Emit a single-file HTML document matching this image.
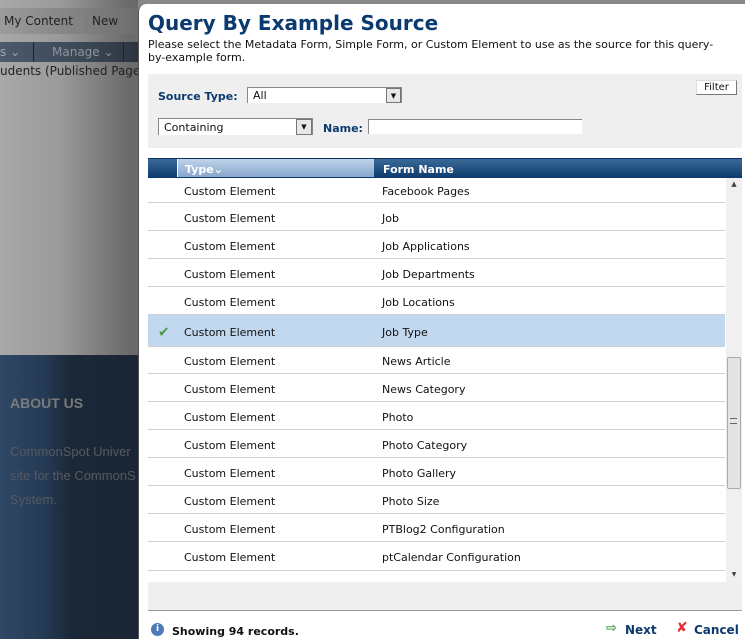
<!DOCTYPE html>
<html><head><meta charset="utf-8"><style>
*{margin:0;padding:0;box-sizing:border-box}
body{width:745px;height:639px;overflow:hidden;position:relative;font-family:"DejaVu Sans","Liberation Sans",sans-serif;font-size:11px;color:#111;background:#888}
.a{position:absolute}
.row{position:absolute;left:148px;width:577px;border-bottom:1px solid #cfcfcf}
.row span{position:absolute;top:50%;transform:translateY(-40%);font-size:11px}
.c1{left:36px}.c2{left:234px}
</style></head><body>
<div class="a" style="left:0;top:0;width:138px;height:355px;background:linear-gradient(90deg,#a8a8a8 0,#9a9a9a 60px,#6a6a6a 130px)"></div>
<div class="a" style="left:0;top:8px;width:138px;height:26px;background:linear-gradient(90deg,#9b9b9b,#6e6e6e)"></div>
<div class="a" style="left:4px;top:14px;font-size:12px;color:#222">My Content</div>
<div class="a" style="left:81px;top:10px;width:1px;height:22px;background:#8a8a8a"></div>
<div class="a" style="left:92px;top:14px;font-size:12px;color:#222">New</div>
<div class="a" style="left:0;top:42px;width:138px;height:20px;background:linear-gradient(90deg,#4c5a6c,#3b4654 90px,#2c3440)"></div>
<div class="a" style="left:0;top:45px;font-size:12px;color:#9aa">s ⌄</div>
<div class="a" style="left:33px;top:42px;width:1px;height:20px;background:#223"></div>
<div class="a" style="left:52px;top:45px;font-size:12px;color:#8a93a0">Manage ⌄</div>
<div class="a" style="left:123px;top:42px;width:1px;height:20px;background:#223"></div>
<div class="a" style="left:0;top:64px;font-size:12px;color:#222">udents (Published Page -</div>
<div class="a" style="left:0;top:355px;width:138px;height:284px;background:linear-gradient(90deg,#2e4866 0,#253a54 45px,#1b2838 70px,#1a2635)"></div>
<div class="a" style="left:10px;top:395px;font-family:'Liberation Sans',sans-serif;font-weight:bold;font-size:14px;color:#7a7a7a">ABOUT US</div>
<div class="a" style="left:10px;top:440px;font-family:'Liberation Sans',sans-serif;font-size:13px;line-height:24px;color:#555a60;white-space:nowrap;width:128px;overflow:hidden">CommonSpot Univer<br>site for the CommonS<br>System.</div>
<div class="a" style="left:138px;top:4px;width:607px;height:635px;background:#fff;border-top-left-radius:8px;border-left:1px solid #555"></div>
<div class="a" style="left:148px;top:11px;font-size:20px;font-weight:bold;color:#0a3a6e">Query By Example Source</div>
<div class="a" style="left:148px;top:38px;width:595px;font-size:11px;line-height:13px;color:#111">Please select the Metadata Form, Simple Form, or Custom Element to use as the source for this query-<br>by-example form.</div>
<div class="a" style="left:148px;top:74px;width:594px;height:74px;background:#efefef"></div>
<div class="a" style="left:696px;top:80px;width:41px;height:15px;background:#fff;border:1px solid #ddd;border-right-color:#777;border-bottom-color:#777;font-size:10px;text-align:center;line-height:13px">Filter</div>
<div class="a" style="left:158px;top:90px;font-weight:bold;color:#0a3a6e;font-size:11px">Source Type:</div>
<div class="a" style="left:247px;top:87px;width:155px;height:16px;background:#fff;border:1px solid #888;border-bottom:none;padding-left:5px;font-size:11px;line-height:16px">All</div>
<div class="a" style="left:386px;top:88px;width:15px;height:15px;background:#e8e8e8;border:1px solid #777;font-size:7px;text-align:center;line-height:14px">▼</div>
<div class="a" style="left:158px;top:118px;width:155px;height:17px;background:#fff;border:1px solid #888;border-bottom:none;padding-left:5px;font-size:11px;line-height:18px">Containing</div>
<div class="a" style="left:296px;top:119px;width:16px;height:16px;background:#e8e8e8;border:1px solid #777;font-size:7px;text-align:center;line-height:14px">▼</div>
<div class="a" style="left:323px;top:122px;font-weight:bold;color:#0a3a6e;font-size:11px">Name:</div>
<div class="a" style="left:368px;top:119px;width:214px;height:15px;background:#fff;border:1px solid #888;border-bottom:none;border-right:none"></div>
<div class="a" style="left:148px;top:158px;width:594px;height:20px;background:linear-gradient(#3a6a98,#0c3a6c);border-top:1px solid #0c3060"></div>
<div class="a" style="left:177px;top:159px;width:197px;height:18px;background:linear-gradient(#c0d4ea,#86a6cc);border-left:1px solid #fff"></div>
<div class="a" style="left:185px;top:163px;font-weight:bold;color:#fff;font-size:11px">Type⌄</div>
<div class="a" style="left:383px;top:163px;font-weight:bold;color:#fff;font-size:11px">Form Name</div>
<div class="row" style="top:178px;height:25px"><span class="c1">Custom Element</span><span class="c2">Facebook Pages</span></div>
<div class="row" style="top:203px;height:28px"><span class="c1">Custom Element</span><span class="c2">Job</span></div>
<div class="row" style="top:231px;height:28px"><span class="c1">Custom Element</span><span class="c2">Job Applications</span></div>
<div class="row" style="top:259px;height:28px"><span class="c1">Custom Element</span><span class="c2">Job Departments</span></div>
<div class="row" style="top:287px;height:28px"><span class="c1">Custom Element</span><span class="c2">Job Locations</span></div>
<div class="row" style="top:315px;height:32px;background:#c2d8ee"><span style="left:10px;color:#4a9a4a;font-size:14px">✔</span><span class="c1">Custom Element</span><span class="c2">Job Type</span></div>
<div class="row" style="top:347px;height:27px"><span class="c1">Custom Element</span><span class="c2">News Article</span></div>
<div class="row" style="top:374px;height:28px"><span class="c1">Custom Element</span><span class="c2">News Category</span></div>
<div class="row" style="top:402px;height:28px"><span class="c1">Custom Element</span><span class="c2">Photo</span></div>
<div class="row" style="top:430px;height:28px"><span class="c1">Custom Element</span><span class="c2">Photo Category</span></div>
<div class="row" style="top:458px;height:28px"><span class="c1">Custom Element</span><span class="c2">Photo Gallery</span></div>
<div class="row" style="top:486px;height:28px"><span class="c1">Custom Element</span><span class="c2">Photo Size</span></div>
<div class="row" style="top:514px;height:28px"><span class="c1">Custom Element</span><span class="c2">PTBlog2 Configuration</span></div>
<div class="row" style="top:542px;height:29px"><span class="c1">Custom Element</span><span class="c2">ptCalendar Configuration</span></div>
<div class="a" style="left:726px;top:178px;width:16px;height:404px;background:#f0f0f0"></div>
<div class="a" style="left:726px;top:180px;width:16px;font-size:7px;text-align:center;color:#444">▲</div>
<div class="a" style="left:727px;top:357px;width:14px;height:132px;background:#e4e4e4;border:1px solid #aaa;border-radius:2px"></div>
<div class="a" style="left:730px;top:418px;width:7px;height:6px;border-top:1px solid #666;border-bottom:1px solid #666"></div>
<div class="a" style="left:726px;top:571px;width:16px;font-size:6px;text-align:center;color:#444">▼</div>
<div class="a" style="left:148px;top:582px;width:594px;height:29px;background:#efefef;border-bottom:1px solid #999"></div>
<div class="a" style="left:151px;top:623px;width:13px;height:13px;border-radius:50%;background:#4a7ab8;color:#fff;font-size:9px;font-weight:bold;text-align:center;line-height:13px">i</div>
<div class="a" style="left:172px;top:625px;font-weight:bold;font-size:11px">Showing 94 records.</div>
<div class="a" style="left:606px;top:621px;color:#3a9a3a;font-size:13px;font-weight:bold">⇨</div>
<div class="a" style="left:625px;top:623px;font-weight:bold;color:#0a3a6e;font-size:12px">Next</div>
<div class="a" style="left:676px;top:620px;color:#e03030;font-size:14px;font-weight:bold">✘</div>
<div class="a" style="left:694px;top:623px;font-weight:bold;color:#0a3a6e;font-size:12px">Cancel</div>
</body></html>
